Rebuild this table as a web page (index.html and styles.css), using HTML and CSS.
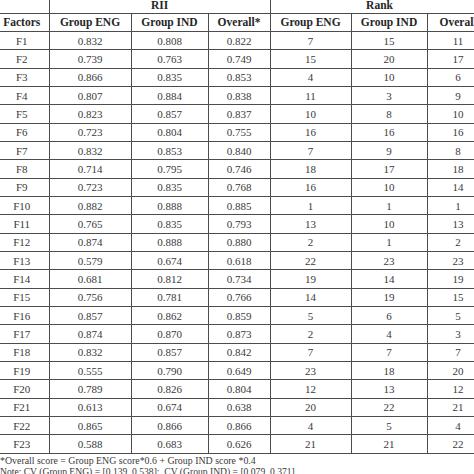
FILE: index.html
```html
<!DOCTYPE html>
<html>
<head>
<meta charset="utf-8">
<link rel="stylesheet" href="styles.css">
</head>
<body>
<div class="wrap">
<table class="rii">
<colgroup>
<col class="c0"><col class="c1"><col class="c2"><col class="c3"><col class="c4"><col class="c5"><col class="c6">
</colgroup>
<thead>
<tr class="band"><th class="blank"></th><th colspan="3">RII</th><th colspan="3">Rank</th></tr>
<tr class="sub"><th class="fac">Factors</th><th>Group ENG</th><th>Group IND</th><th>Overall*</th><th>Group ENG</th><th>Group IND</th><th>Overall</th></tr>
</thead>
<tbody>
<tr><td>F1</td><td>0.832</td><td>0.808</td><td>0.822</td><td>7</td><td>15</td><td>11</td></tr>
<tr><td>F2</td><td>0.739</td><td>0.763</td><td>0.749</td><td>15</td><td>20</td><td>17</td></tr>
<tr><td>F3</td><td>0.866</td><td>0.835</td><td>0.853</td><td>4</td><td>10</td><td>6</td></tr>
<tr><td>F4</td><td>0.807</td><td>0.884</td><td>0.838</td><td>11</td><td>3</td><td>9</td></tr>
<tr><td>F5</td><td>0.823</td><td>0.857</td><td>0.837</td><td>10</td><td>8</td><td>10</td></tr>
<tr><td>F6</td><td>0.723</td><td>0.804</td><td>0.755</td><td>16</td><td>16</td><td>16</td></tr>
<tr><td>F7</td><td>0.832</td><td>0.853</td><td>0.840</td><td>7</td><td>9</td><td>8</td></tr>
<tr><td>F8</td><td>0.714</td><td>0.795</td><td>0.746</td><td>18</td><td>17</td><td>18</td></tr>
<tr><td>F9</td><td>0.723</td><td>0.835</td><td>0.768</td><td>16</td><td>10</td><td>14</td></tr>
<tr><td>F10</td><td>0.882</td><td>0.888</td><td>0.885</td><td>1</td><td>1</td><td>1</td></tr>
<tr><td>F11</td><td>0.765</td><td>0.835</td><td>0.793</td><td>13</td><td>10</td><td>13</td></tr>
<tr><td>F12</td><td>0.874</td><td>0.888</td><td>0.880</td><td>2</td><td>1</td><td>2</td></tr>
<tr><td>F13</td><td>0.579</td><td>0.674</td><td>0.618</td><td>22</td><td>23</td><td>23</td></tr>
<tr><td>F14</td><td>0.681</td><td>0.812</td><td>0.734</td><td>19</td><td>14</td><td>19</td></tr>
<tr><td>F15</td><td>0.756</td><td>0.781</td><td>0.766</td><td>14</td><td>19</td><td>15</td></tr>
<tr><td>F16</td><td>0.857</td><td>0.862</td><td>0.859</td><td>5</td><td>6</td><td>5</td></tr>
<tr><td>F17</td><td>0.874</td><td>0.870</td><td>0.873</td><td>2</td><td>4</td><td>3</td></tr>
<tr><td>F18</td><td>0.832</td><td>0.857</td><td>0.842</td><td>7</td><td>7</td><td>7</td></tr>
<tr><td>F19</td><td>0.555</td><td>0.790</td><td>0.649</td><td>23</td><td>18</td><td>20</td></tr>
<tr><td>F20</td><td>0.789</td><td>0.826</td><td>0.804</td><td>12</td><td>13</td><td>12</td></tr>
<tr><td>F21</td><td>0.613</td><td>0.674</td><td>0.638</td><td>20</td><td>22</td><td>21</td></tr>
<tr><td>F22</td><td>0.865</td><td>0.866</td><td>0.866</td><td>4</td><td>5</td><td>4</td></tr>
<tr><td>F23</td><td>0.588</td><td>0.683</td><td>0.626</td><td>21</td><td>21</td><td>22</td></tr>
</tbody>
</table>
<div class="notes">
<p class="n1">*Overall score = Group ENG score*0.6 + Group IND score *0.4</p>
<p class="n2">Note: CV (Group ENG) = [0.139, 0.538];&nbsp;&nbsp;CV (Group IND) = [0.079, 0.371]</p>
</div>
</div>
</body>
</html>
```

FILE: styles.css
```css
html, body {
  margin: 0;
  padding: 0;
  background: #ffffff;
  overflow: hidden;
}

.wrap {
  margin: -5px 0 0 -5px;
  width: 494px;
  font-family: "Liberation Serif", "Times New Roman", serif;
  color: #3a3a3a;
}

.rii {
  border-collapse: collapse;
  table-layout: fixed;
  width: 494px;
}

.c0 { width: 54px; }
.c1 { width: 82px; }
.c2 { width: 77px; }
.c3 { width: 62px; }
.c4 { width: 81px; }
.c5 { width: 76px; }
.c6 { width: 62px; }

.rii tr {
  height: 18.33px;
}

.rii th,
.rii td {
  padding: 0;
  text-align: center;
  vertical-align: middle;
  line-height: 14px;
  border: 1px solid #4c4c4c;
  white-space: nowrap;
  overflow: hidden;
}

.rii th {
  font-size: 11.5px;
  font-weight: bold;
  color: #262626;
}

.band th {
  padding-top: 2px;
}

.rii td {
  font-size: 11px;
}

.band th {
  border-top: none;
}

.rii th.blank {
  border-left: none;
  border-bottom: none;
}

.rii tr > :first-child {
  border-left: none;
}

.notes {
  padding: 1px 0 0 5px;
  line-height: 11px;
  color: #3a3a3a;
}

.notes p {
  margin: 0;
  white-space: nowrap;
}

.n1 {
  font-size: 9.9px;
}

.n2 {
  font-size: 9.6px;
}
```
